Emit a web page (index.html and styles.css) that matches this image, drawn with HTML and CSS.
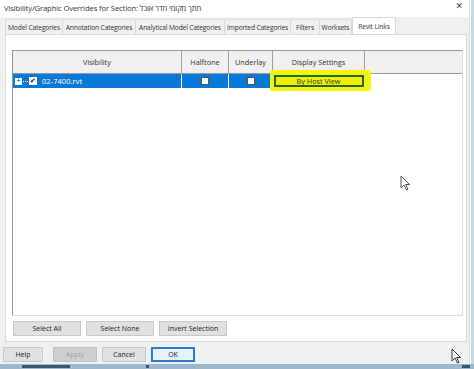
FILE: index.html
```html
<!DOCTYPE html>
<html>
<head>
<meta charset="utf-8">
<link rel="stylesheet" href="styles.css">
</head>
<body>
<div class="screen">
  <div class="dialog">
    <div class="titlebar">
      <span class="title">Visibility/Graphic Overrides for Section: <span dir="rtl">חתך מקומי חדר אוכל</span></span>
      <span class="close">✕</span>
    </div>
    <div class="tabs">
      <span class="tab t1">Model Categories</span>
      <span class="tab t2">Annotation Categories</span>
      <span class="tab t3">Analytical Model Categories</span>
      <span class="tab t4">Imported Categories</span>
      <span class="tab t5">Filters</span>
      <span class="tab t6">Worksets</span>
      <span class="tab t7 active">Revit Links</span>
    </div>
    <div class="panel">
      <div class="grid">
        <div class="ghead">
          <div class="c c-vis">Visibility</div>
          <div class="c c-half">Halftone</div>
          <div class="c c-under">Underlay</div>
          <div class="c c-disp">Display Settings</div>
          <div class="c c-rest"></div>
        </div>
        <div class="grow">
          <div class="c c-vis vis-cell">
            <span class="plus">+</span><span class="dash"></span><span class="chk on">✔</span><span class="name">02-7400.rvt</span>
          </div>
          <div class="c c-half"><span class="box"></span></div>
          <div class="c c-under"><span class="box"></span></div>
          <div class="c c-disp disp-cell">
            <span class="marker"></span>
            <span class="disp-in">By Host View</span>
          </div>
          <div class="c c-rest empty"></div>
        </div>
        <div class="gbody"></div>
      </div>
      <div class="selbtns">
        <button class="btn">Select All</button>
        <button class="btn">Select None</button>
        <button class="btn">Invert Selection</button>
      </div>
    </div>
    <div class="footer">
      <button class="btn fb help">Help</button>
      <button class="btn fb disabled">Apply</button>
      <button class="btn fb">Cancel</button>
      <button class="btn fb ok">OK</button>
      <span class="cursor2">
        <svg width="12" height="16" viewBox="0 0 12 16"><path d="M1 1 L1 13 L4 10 L6.5 15 L8 14.3 L5.6 9.5 L9.5 9.5 Z" fill="#fff" stroke="#333" stroke-width="1"/></svg>
      </span>
    </div>
  </div>
  <div class="sidebar"></div>
  <span class="cursor1">
    <svg width="12" height="16" viewBox="0 0 12 16"><path d="M1 1 L1 13 L4 10 L6.5 15 L8 14.3 L5.6 9.5 L9.5 9.5 Z" fill="#fff" stroke="#555" stroke-width="1"/></svg>
  </span>
  <div class="taskbar">
    <span class="tb-mark m1"></span>
    <span class="tb-mark m2"></span>
    <span class="tb-mark m3"></span>
  </div>
</div>
</body>
</html>
```
FILE: styles.css
```css
* { box-sizing: border-box; }
html, body { margin: 0; padding: 0; }
body {
  width: 474px; height: 369px; overflow: hidden;
  font-family: "Open Sans", "Noto Sans", "DejaVu Sans", sans-serif;
  font-size: 8px; color: #222;
  background: #fff;
}
.screen { position: relative; width: 474px; height: 369px; display: flex; flex-direction: column; }
.dialog {
  width: 470px; height: 364px; display: flex; flex-direction: column;
  background: #f0f0f0; border-right: 1px solid #e4dcdc;
}
.titlebar {
  height: 17px; background: #fff; display: flex; align-items: center;
  justify-content: space-between; padding: 0 4px 2px 4px;
}
.title { font-size: 7.6px; color: #333; letter-spacing: -0.1px; }
.close { font-size: 9px; color: #444; margin-right: 2px; margin-top: -4px; }
.tabs {
  height: 17px; display: flex; align-items: flex-end; padding-left: 5px;
  background: #f0f0f0;
}
.tab {
  height: 15px; display: flex; align-items: center; justify-content: center;
  border: 1px solid #d9d9d9; border-bottom: none; margin-right: -1px;
  font-size: 6.7px; letter-spacing: -0.15px; color: #333; background: #f0f0f0; white-space: nowrap;
}
.t1 { width: 58px; }
.t2 { width: 74px; }
.t3 { width: 90px; }
.t4 { width: 67px; }
.t5 { width: 30px; }
.t6 { width: 33px; }
.tab.active { width: 44px; height: 17px; background: #fff; position: relative; z-index: 1; margin-left: 1px; }
.panel {
  height: 308px; background: #fff; margin-left: 5px; margin-right: 2px;
  border: 1px solid #d9d9d9; display: flex; flex-direction: column;
  padding: 15px 2px 0 6px;
}
.grid {
  height: 266px; width: 451px; border: 1px solid #999; border-bottom-color: #ddd; border-right-color: #ddd;
  display: flex; flex-direction: column; background: #fff;
}
.ghead { height: 23px; display: flex; background: #f0f0f0; border-bottom: 1px solid #9a9a9a; }
.ghead .c { display: flex; align-items: center; justify-content: center; font-size: 7.3px; color: #333; border-right: 1px solid #a0a0a0; }
.ghead .c-rest { border-right: none; }
.c-vis { width: 169px; }
.c-half { width: 47px; }
.c-under { width: 44px; }
.c-disp { width: 92px; }
.c-rest { flex: 1; }
.grow { height: 14px; display: flex; background: #0a78d6; position: relative; }
.grow .c { border-right: 1px solid #fff; display: flex; align-items: center; justify-content: center; }
.grow .c-rest { border-right: none; background: #fff; }
.vis-cell { justify-content: flex-start !important; padding-left: 2px; color: #fff; }
.plus {
  width: 7px; height: 7px; background: #fff; color: #0a78d6; font-size: 7px; line-height: 6px;
  display: inline-flex; justify-content: center; font-weight: bold;
}
.dash { width: 5px; border-top: 1px dotted #fff; margin: 0 1px; }
.chk {
  width: 8px; height: 8px; background: #fff; color: #111; font-size: 7px; line-height: 8px;
  display: inline-flex; justify-content: center; font-weight: bold;
}
.name { margin-left: 5px; font-size: 7.6px; color: #fff; }
.box { width: 8px; height: 8px; background: #fff; border: 1px solid #555; }
.disp-cell { position: relative; }
.marker {
  position: absolute; left: -3px; top: -4px; width: 101px; height: 21px;
  background: #f5f50a; z-index: 0; border-radius: 2px;
}
.disp-in {
  position: relative; z-index: 1; width: 90px; height: 12px; border: 2px solid #1f6a1a;
  display: flex; align-items: center; justify-content: center; color: #333; font-size: 7.3px;
  background: #f0f000;
}
.gbody { flex: 1; }
.selbtns { display: flex; gap: 5px; margin-top: 5px; padding-left: 1px; }
.btn {
  font-family: inherit; font-size: 7px; color: #222; height: 15px;
  background: #e1e1e1; border: 1px solid #c8c8c8; padding: 0; margin: 0;
}
.selbtns .btn { width: 68px; }
.footer { flex: 1; display: flex; align-items: center; gap: 5px; padding-left: 3px; position: relative; padding-top: 3px; }
.fb { width: 44px; }
.help { width: 40px; margin-right: 5px; }
.disabled { color: #a0a0a0; background: #cfcfcf; border-color: #c2c2c2; }
.ok { border: 2px solid #2a7ad0; background: #e5f1fb; }
.cursor2 { position: absolute; left: 451px; top: 6px; }
.cursor1 { position: absolute; left: 400px; top: 175px; }
.sidebar { position: absolute; right: 0; top: 0; width: 3px; height: 364px; background: #bcdcf0; }
.taskbar { height: 5px; background: #9fb7cc; position: relative; }
.tb-mark { position: absolute; top: 1px; height: 3px; background: #3d5670; }
.m1 { left: 22px; width: 48px; }
.m2 { left: 146px; width: 3px; }
.m3 { left: 462px; width: 8px; }
```
